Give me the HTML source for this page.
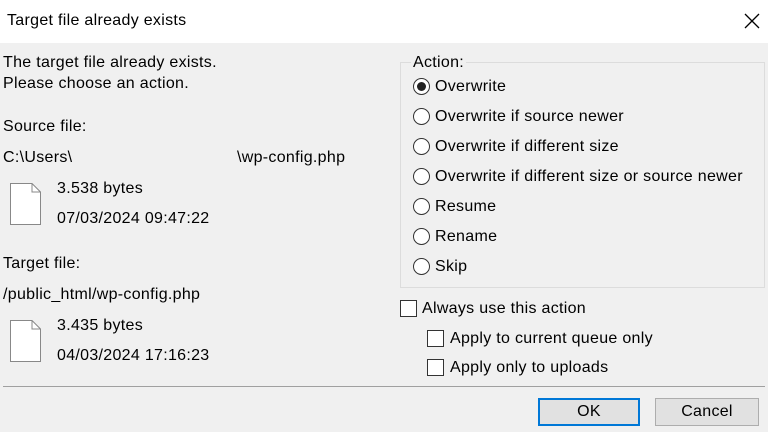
<!DOCTYPE html>
<html><head><style>
body{margin:0;width:768px;height:432px;background:#f0f0f0;font-family:"Liberation Sans",sans-serif;font-size:16px;letter-spacing:0.3px;color:#000;position:relative;overflow:hidden}
.a{position:absolute;white-space:nowrap;line-height:18px}
.title{position:absolute;left:0;top:0;width:768px;height:43px;background:#fff}
.rad{position:absolute;width:15px;height:15px;border:1px solid #333;border-radius:50%;background:#fff}
.chk{position:absolute;width:15px;height:15px;border:1px solid #333;background:#fff}
.btn{position:absolute;height:26px;background:#e1e1e1;border:1px solid #adadad;text-align:center;line-height:26px}
</style></head><body>
<div class="title"></div>
<div class="a" style="left:7px;top:12px">Target file already exists</div>
<svg class="a" style="left:744px;top:13px" width="16" height="16"><path d="M1 1L15 15M15 1L1 15" stroke="#000" stroke-width="1.3"/></svg>

<div class="a" style="left:3px;top:54px">The target file already exists.</div>
<div class="a" style="left:3px;top:75px">Please choose an action.</div>
<div class="a" style="left:3px;top:118px">Source file:</div>
<div class="a" style="left:3px;top:149px">C:\Users\</div>
<div class="a" style="left:237px;top:149px">\wp-config.php</div>
<svg class="a" style="left:10px;top:183px" width="32" height="42"><path d="M0.5 0.5H22L30.5 9V41.5H0.5Z" fill="#fff" stroke="#888"/><path d="M22 0.5V9H30.5" fill="none" stroke="#888"/></svg>
<div class="a" style="left:57px;top:180px">3.538 bytes</div>
<div class="a" style="left:57px;top:210px">07/03/2024 09:47:22</div>
<div class="a" style="left:3px;top:255px">Target file:</div>
<div class="a" style="left:3px;top:286px">/public_html/wp-config.php</div>
<svg class="a" style="left:10px;top:320px" width="32" height="42"><path d="M0.5 0.5H22L30.5 9V41.5H0.5Z" fill="#fff" stroke="#888"/><path d="M22 0.5V9H30.5" fill="none" stroke="#888"/></svg>
<div class="a" style="left:57px;top:317px">3.435 bytes</div>
<div class="a" style="left:57px;top:347px">04/03/2024 17:16:23</div>

<div style="position:absolute;left:400px;top:62px;width:363px;height:224px;border:1px solid #dcdcdc"></div>
<div class="a" style="left:411px;top:54px;background:#f0f0f0;padding:0 2px">Action:</div>
<div class="rad" style="left:413px;top:78px"></div><div style="position:absolute;left:417px;top:82px;width:9px;height:9px;border-radius:50%;background:#222"></div>
<div class="a" style="left:435px;top:78px">Overwrite</div>
<div class="rad" style="left:413px;top:108px"></div><div class="a" style="left:435px;top:108px">Overwrite if source newer</div>
<div class="rad" style="left:413px;top:138px"></div><div class="a" style="left:435px;top:138px">Overwrite if different size</div>
<div class="rad" style="left:413px;top:168px"></div><div class="a" style="left:435px;top:168px">Overwrite if different size or source newer</div>
<div class="rad" style="left:413px;top:198px"></div><div class="a" style="left:435px;top:198px">Resume</div>
<div class="rad" style="left:413px;top:228px"></div><div class="a" style="left:435px;top:228px">Rename</div>
<div class="rad" style="left:413px;top:258px"></div><div class="a" style="left:435px;top:258px">Skip</div>

<div class="chk" style="left:400px;top:300px"></div><div class="a" style="left:422px;top:300px">Always use this action</div>
<div class="chk" style="left:427px;top:330px"></div><div class="a" style="left:450px;top:330px">Apply to current queue only</div>
<div class="chk" style="left:427px;top:359px"></div><div class="a" style="left:450px;top:359px">Apply only to uploads</div>

<div style="position:absolute;left:3px;top:386px;width:762px;height:1px;background:#a0a0a0"></div>
<div class="btn" style="left:538px;top:398px;width:98px;border:2px solid #0078d7;height:24px;line-height:24px">OK</div>
<div class="btn" style="left:655px;top:398px;width:102px">Cancel</div>
</body></html>
